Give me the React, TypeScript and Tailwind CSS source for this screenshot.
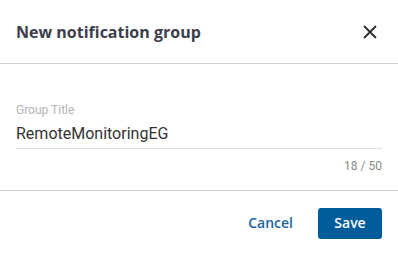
export default function App() {
  return (
    <div className="flex h-[255px] w-[398px] flex-col bg-white">
      <div className="flex h-16 shrink-0 items-center justify-between border-b border-[#cfcfdb] pl-4 pr-4">
        <h2 className="font-['Open_Sans',sans-serif] text-base font-bold text-[#3c3e4b]">
          New notification group
        </h2>
        <button type="button" className="flex h-6 w-6 items-center justify-center text-[#2b2b2b]">
          <svg width="16" height="16" viewBox="0 0 16 16" fill="none" stroke="currentColor" strokeWidth="1.8">
            <path d="M2 2L14 14M14 2L2 14" />
          </svg>
        </button>
      </div>

      <div className="flex h-[127px] shrink-0 flex-col border-b border-[#cfcfdb] px-4 pt-[38px] font-['Roboto',sans-serif]">
        <label className="text-xs leading-4 text-[#b3b3b3]">Group Title</label>
        <div className="mt-1 border-b border-[#e0e0e0] pb-0.5 text-base leading-6 text-[#333333]">
          RemoteMonitoringEG
        </div>
        <p className="mt-[9px] text-right text-xs leading-4 text-[#8a8a8a]">18 / 50</p>
      </div>

      <div className="flex flex-1 items-center justify-end gap-[25px] px-4 font-['Open_Sans',sans-serif] text-sm font-semibold">
        <button type="button" className="text-[#1c65a0]">
          Cancel
        </button>
        <button type="button" className="h-[31px] w-16 rounded-[3px] bg-[#005c9b] text-white">
          Save
        </button>
      </div>
    </div>
  );
}
